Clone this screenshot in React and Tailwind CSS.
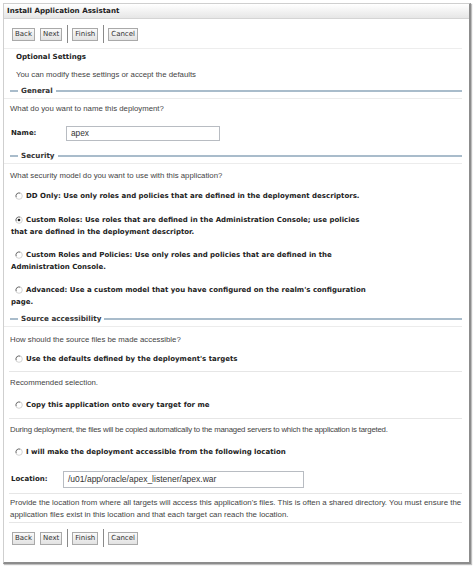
import React from "react";

const sans = { fontFamily: '"Liberation Sans", Arial, sans-serif' };
const bold = { fontFamily: '"DejaVu Sans", Verdana, sans-serif' };

function Radio({ checked }) {
  return (
    <svg width="8" height="8" viewBox="0 0 8 8" className="shrink-0">
      <circle cx="4" cy="4" r="3.3" fill="#fff" stroke="#c8c8c8" strokeWidth="0.8" />
      <path d="M1.2 5.2 A3.1 3.1 0 0 1 5.2 1.2" fill="none" stroke="#6b6b6b" strokeWidth="0.9" />
      {checked && <circle cx="4" cy="4" r="1.3" fill="#222" />}
    </svg>
  );
}

function Btn({ children }) {
  return (
    <div
      className="h-[13px] px-[2px] flex items-center border border-[#a9a9a9] bg-gradient-to-b from-[#fafafa] to-[#e2e2e2] text-[7px] text-[#333] leading-none"
      style={bold}
    >
      {children}
    </div>
  );
}

function Sep() {
  return <div className="w-px h-[18px] bg-[#8a8a8a]" />;
}

function ButtonRow() {
  return (
    <div className="flex items-center h-[18px] pl-[8px]">
      <Btn>Back</Btn>
      <div className="w-[5px]" />
      <Btn>Next</Btn>
      <div className="w-[5px]" />
      <Sep />
      <div className="w-[4px]" />
      <Btn>Finish</Btn>
      <div className="w-[5px]" />
      <Sep />
      <div className="w-[4px]" />
      <Btn>Cancel</Btn>
    </div>
  );
}

function Header({ title }) {
  return (
    <div className="h-[15px] flex items-center border-b border-[#ececec] mr-[7px]">
      <div className="w-[8px] h-[2px] bg-[#a9bccb] ml-[6px]" />
      <span className="px-[3px] font-bold text-[7.2px] text-[#333] leading-none" style={bold}>{title}</span>
      <div className="flex-1 h-[2px] bg-[#a9bccb]" />
    </div>
  );
}

function Text({ children, className = "" }) {
  return <div className={"text-[7.8px] text-[#444] leading-[12px] whitespace-nowrap " + className}>{children}</div>;
}

function Option({ checked, lines, className = "" }) {
  return (
    <div className={"pl-[11px] font-bold text-[7px] text-[#222] leading-[12px] whitespace-nowrap " + className} style={bold}>
      <div className="flex items-center gap-[3px]">
        <Radio checked={checked} />
        <span>{lines[0]}</span>
      </div>
      {lines[1] && <div className="-ml-[4px]">{lines[1]}</div>}
    </div>
  );
}

function Line() {
  return <div className="border-b border-[#e6e6e6] mr-[7px] ml-[5px]" />;
}

export default function App() {
  return (
    <div className="w-[474px] h-[567px] bg-white pt-[3px] pl-[3px]" style={sans}>
      <div className="w-[468px] h-[561px] border-l border-t border-[#cfcfcf] border-r-2 border-b-2 border-r-[#8c8c8c] border-b-[#8c8c8c] shadow-[1px_1px_1px_rgba(0,0,0,0.25)] bg-white">
        {/* title bar */}
        <div
          className="h-[15px] flex items-center pl-[3px] bg-gradient-to-b from-[#ffffff] to-[#e6e6e6] border-b border-[#d4d4d4] font-bold text-[7.1px] text-[#222]"
          style={bold}
        >
          Install Application Assistant
        </div>

        <div className="pt-[6px]" />
        <ButtonRow />
        <div className="h-[6px] border-b border-[#ededed] mr-[7px]" />

        <div className="h-[17px] flex items-center pl-[12px] font-bold text-[7.1px] text-[#222]" style={bold}>Optional Settings</div>
        <Text className="h-[18px] flex items-center pl-[12px]">You can modify these settings or accept the defaults</Text>

        <Header title="General" />
        <Text className="h-[20px] flex items-center pl-[6px]">What do you want to name this deployment?</Text>
        <div className="h-[30px] flex items-start pt-[7px] pl-[7px]">
          <div className="w-[55px] font-bold text-[7px] text-[#222] leading-[15px]" style={bold}>Name:</div>
          <div className="w-[154px] h-[15px] border border-[#b8bcc2] flex items-center pl-[4px] text-[8.3px] text-[#333]">apex</div>
        </div>

        <Header title="Security" />
        <Text className="h-[24px] flex items-center pl-[6px]">What security model do you want to use with this application?</Text>
        <Option className="mt-[2px]" lines={["DD Only: Use only roles and policies that are defined in the deployment descriptors."]} />
        <Option className="mt-[12px]" checked lines={["Custom Roles: Use roles that are defined in the Administration Console; use policies", "that are defined in the deployment descriptor."]} />
        <Option className="mt-[11px]" lines={["Custom Roles and Policies: Use only roles and policies that are defined in the", "Administration Console."]} />
        <Option className="mt-[11px]" lines={["Advanced: Use a custom model that you have configured on the realm's configuration", "page."]} />

        <div className="h-[4px]" />
        <Header title="Source accessibility" />
        <Text className="h-[26px] flex items-center pl-[6px]">How should the source files be made accessible?</Text>
        <Option lines={["Use the defaults defined by the deployment's targets"]} />
        <div className="h-[6px]" />
        <Line />
        <Text className="h-[27px] pt-[5px] pl-[6px]">Recommended selection.</Text>
        <Option lines={["Copy this application onto every target for me"]} />
        <div className="h-[7px]" />
        <Line />
        <Text className="h-[27px] pt-[5px] pl-[6px] tracking-[-0.2px]">During deployment, the files will be copied automatically to the managed servers to which the application is targeted.</Text>
        <Option lines={["I will make the deployment accessible from the following location"]} />

        <div className="h-[35px] flex items-center pl-[7px] pt-[8px]">
          <div className="w-[52px] font-bold text-[7px] text-[#222]" style={bold}>Location:</div>
          <div className="w-[241px] h-[17px] border border-[#b8bcc2] flex items-center pl-[4px] text-[8.5px] text-[#333]">/u01/app/oracle/apex_listener/apex.war</div>
        </div>
        <Line />
        <div className="pt-[3px] pl-[6px] pb-[1px] text-[7.9px] text-[#444] leading-[12px] whitespace-nowrap">
          Provide the location from where all targets will access this application's files. This is often a shared directory. You must ensure the
          <br />
          application files exist in this location and that each target can reach the location.
        </div>
        <Line />
        <div className="pt-[6px]" />
        <ButtonRow />
      </div>
    </div>
  );
}
